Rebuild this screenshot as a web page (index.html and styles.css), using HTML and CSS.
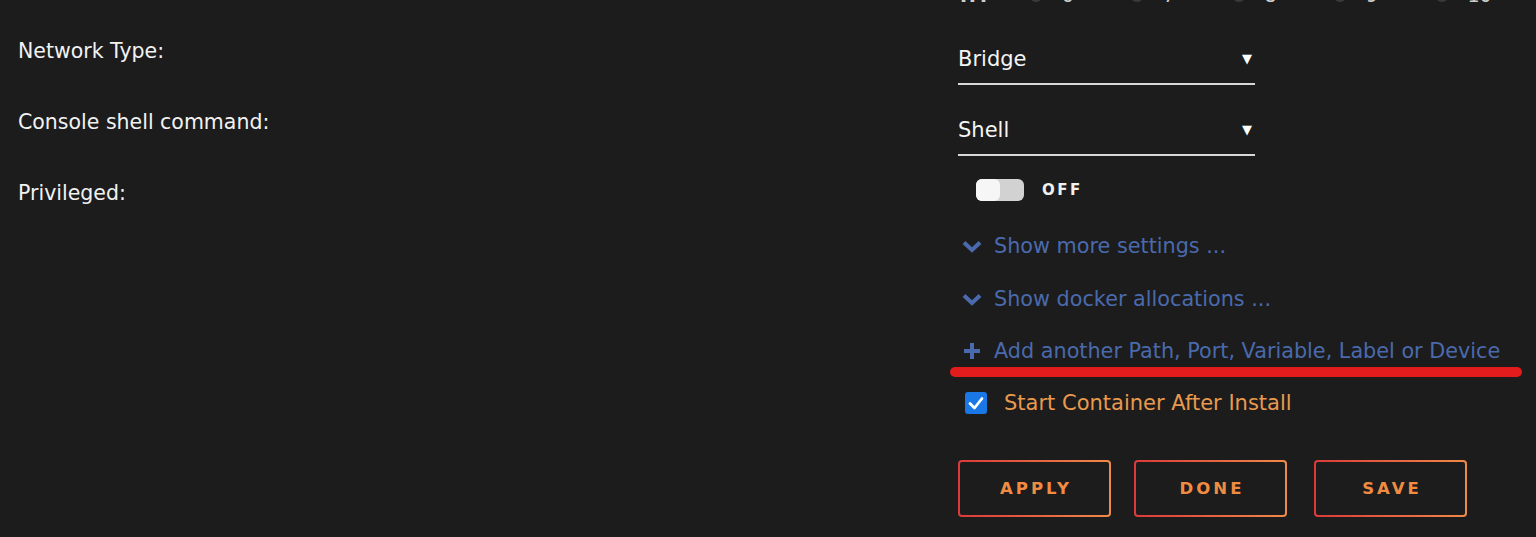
FILE: index.html
```html
<!DOCTYPE html>
<html lang="en">
<head>
<meta charset="utf-8">
<title>Container settings</title>
<link rel="stylesheet" href="styles.css">
</head>
<body>
<div class="page">
  <div class="cpu-row">
    <div class="cpu-inner">
      <span class="cpu-label">HT</span>
      <span class="cpu-pair"><span class="cpu-dot"></span><span class="cpu-num">6</span></span>
      <span class="cpu-pair"><span class="cpu-dot"></span><span class="cpu-num">7</span></span>
      <span class="cpu-pair"><span class="cpu-dot"></span><span class="cpu-num">8</span></span>
      <span class="cpu-pair"><span class="cpu-dot"></span><span class="cpu-num">9</span></span>
      <span class="cpu-pair"><span class="cpu-dot"></span><span class="cpu-num">10</span></span>
    </div>
  </div>

  <div class="form">
    <div class="field">
      <div class="label">Network Type:</div>
      <div class="control">
        <div class="select"><span>Bridge</span><span class="caret">&#9660;</span></div>
      </div>
    </div>
    <div class="field">
      <div class="label">Console shell command:</div>
      <div class="control">
        <div class="select"><span>Shell</span><span class="caret">&#9660;</span></div>
      </div>
    </div>
    <div class="field">
      <div class="label">Privileged:</div>
      <div class="control">
        <div class="toggle-row">
          <span class="toggle"><span class="knob"></span></span>
          <span class="toggle-text">OFF</span>
        </div>
      </div>
    </div>

    <div class="actions">
      <a class="link link-first">
        <svg class="ico" viewBox="0 0 20 14" width="20" height="14"><path d="M2 3.5 L10 11 L18 3.5" fill="none" stroke="currentColor" stroke-width="4" stroke-linejoin="miter"/></svg>
        <span>Show more settings ...</span>
      </a>
      <a class="link">
        <svg class="ico" viewBox="0 0 20 14" width="20" height="14"><path d="M2 3.5 L10 11 L18 3.5" fill="none" stroke="currentColor" stroke-width="4" stroke-linejoin="miter"/></svg>
        <span>Show docker allocations ...</span>
      </a>
      <a class="link">
        <svg class="ico" viewBox="0 0 20 20" width="20" height="20"><path d="M10 2 V18 M2 10 H18" fill="none" stroke="currentColor" stroke-width="4"/></svg>
        <span>Add another Path, Port, Variable, Label or Device</span>
      </a>
      <div class="highlight"></div>
      <label class="check-row">
        <span class="checkbox"><svg viewBox="0 0 22 22" width="22" height="22"><path d="M5 11.5 L9.5 16 L17 6.5" fill="none" stroke="#fff" stroke-width="2.8" stroke-linecap="round" stroke-linejoin="round"/></svg></span>
        <span class="check-text">Start Container After Install</span>
      </label>
      <div class="buttons">
        <button class="btn">APPLY</button>
        <button class="btn btn-done">DONE</button>
        <button class="btn btn-save">SAVE</button>
      </div>
    </div>
  </div>
</div>
</body>
</html>
```

FILE: styles.css
```css
html, body {
  margin: 0;
  padding: 0;
  background: #1c1c1c;
}
body {
  font-family: "DejaVu Sans", "Noto Sans", sans-serif;
  color: #f0f0f0;
  width: 1536px;
  height: 537px;
  overflow: hidden;
}
.page {
  display: flex;
  flex-direction: column;
}

/* clipped row at the very top */
.cpu-row {
  height: 6px;
  overflow: hidden;
  padding-left: 960px;
}
.cpu-inner {
  display: flex;
  align-items: center;
  margin-top: -16px;
  height: 22px;
  font-size: 19px;
  line-height: 22px;
  color: #cfcfcf;
}
.cpu-label {
  width: 73px;
  font-weight: 600;
  letter-spacing: 1px;
}
.cpu-pair {
  display: flex;
  align-items: center;
  width: 108px;
}
.cpu-dot {
  width: 14px;
  height: 14px;
  border-radius: 50%;
  background: #3a3a3a;
  margin-right: 19px;
}
.cpu-num {
  font-size: 19px;
}

/* form */
.form {
  display: flex;
  flex-direction: column;
  padding-top: 31px;
}
.field {
  display: grid;
  grid-template-columns: 958px 297px;
  height: 71px;
  align-items: start;
}
.label {
  padding-left: 18px;
  padding-top: 1px;
  font-size: 20.5px;
  line-height: 26px;
  color: #f2f2f2;
}
.control {
  padding-top: 9px;
}
.select {
  display: flex;
  justify-content: space-between;
  align-items: center;
  font-size: 21px;
  line-height: 26px;
  color: #f5f5f5;
  padding-bottom: 11px;
  border-bottom: 2px solid #d8d8d8;
}
.caret {
  font-size: 13px;
  padding-right: 3px;
  color: #fff;
}
.toggle-row {
  display: flex;
  align-items: center;
  gap: 18px;
  padding-left: 18px;
  height: 26px;
  margin-top: -11px;
}
.toggle {
  display: block;
  width: 48px;
  height: 22px;
  border-radius: 6px;
  background: #d2d2d2;
}
.knob {
  display: block;
  width: 24px;
  height: 22px;
  border-radius: 6px;
  background: #f6f6f6;
}
.toggle-text {
  font-size: 15px;
  font-weight: 700;
  letter-spacing: 2.5px;
  color: #f0f0f0;
}

/* actions in the right column */
.actions {
  display: flex;
  flex-direction: column;
  padding-left: 958px;
}
.link {
  display: flex;
  align-items: center;
  gap: 12px;
  padding-left: 4px;
  height: 26px;
  margin-top: 26.5px;
  font-size: 20.75px;
  color: #4a6aad;
}
.link-first {
  margin-top: -17px;
}
.ico {
  display: block;
  flex: none;
}
.highlight {
  margin-left: -8px;
  margin-top: 3px;
  width: 572px;
  height: 10px;
  border-radius: 5px;
  background: #e21b1d;
}
.check-row {
  display: flex;
  align-items: center;
  gap: 17px;
  padding-left: 7px;
  margin-top: 14px;
  height: 24px;
}
.checkbox {
  display: flex;
  width: 22px;
  height: 22px;
  border-radius: 3px;
  background: #1a77e6;
}
.check-text {
  font-size: 21px;
  color: #e99a4e;
}
.buttons {
  display: flex;
  gap: 23px;
  margin-top: 45px;
}
.btn {
  width: 153px;
  height: 57px;
  box-sizing: border-box;
  border: 2px solid transparent;
  border-radius: 4px;
  background:
    linear-gradient(#1c1c1c, #1c1c1c) padding-box,
    linear-gradient(90deg, #dc3a3a, #f08a48) border-box;
  font-family: "DejaVu Sans", sans-serif;
  font-size: 16.5px;
  font-weight: 700;
  letter-spacing: 3px;
  color: #f08c42;
  padding: 0 0 0 3px;
}
.btn-save {
  margin-left: 4px;
}
```
